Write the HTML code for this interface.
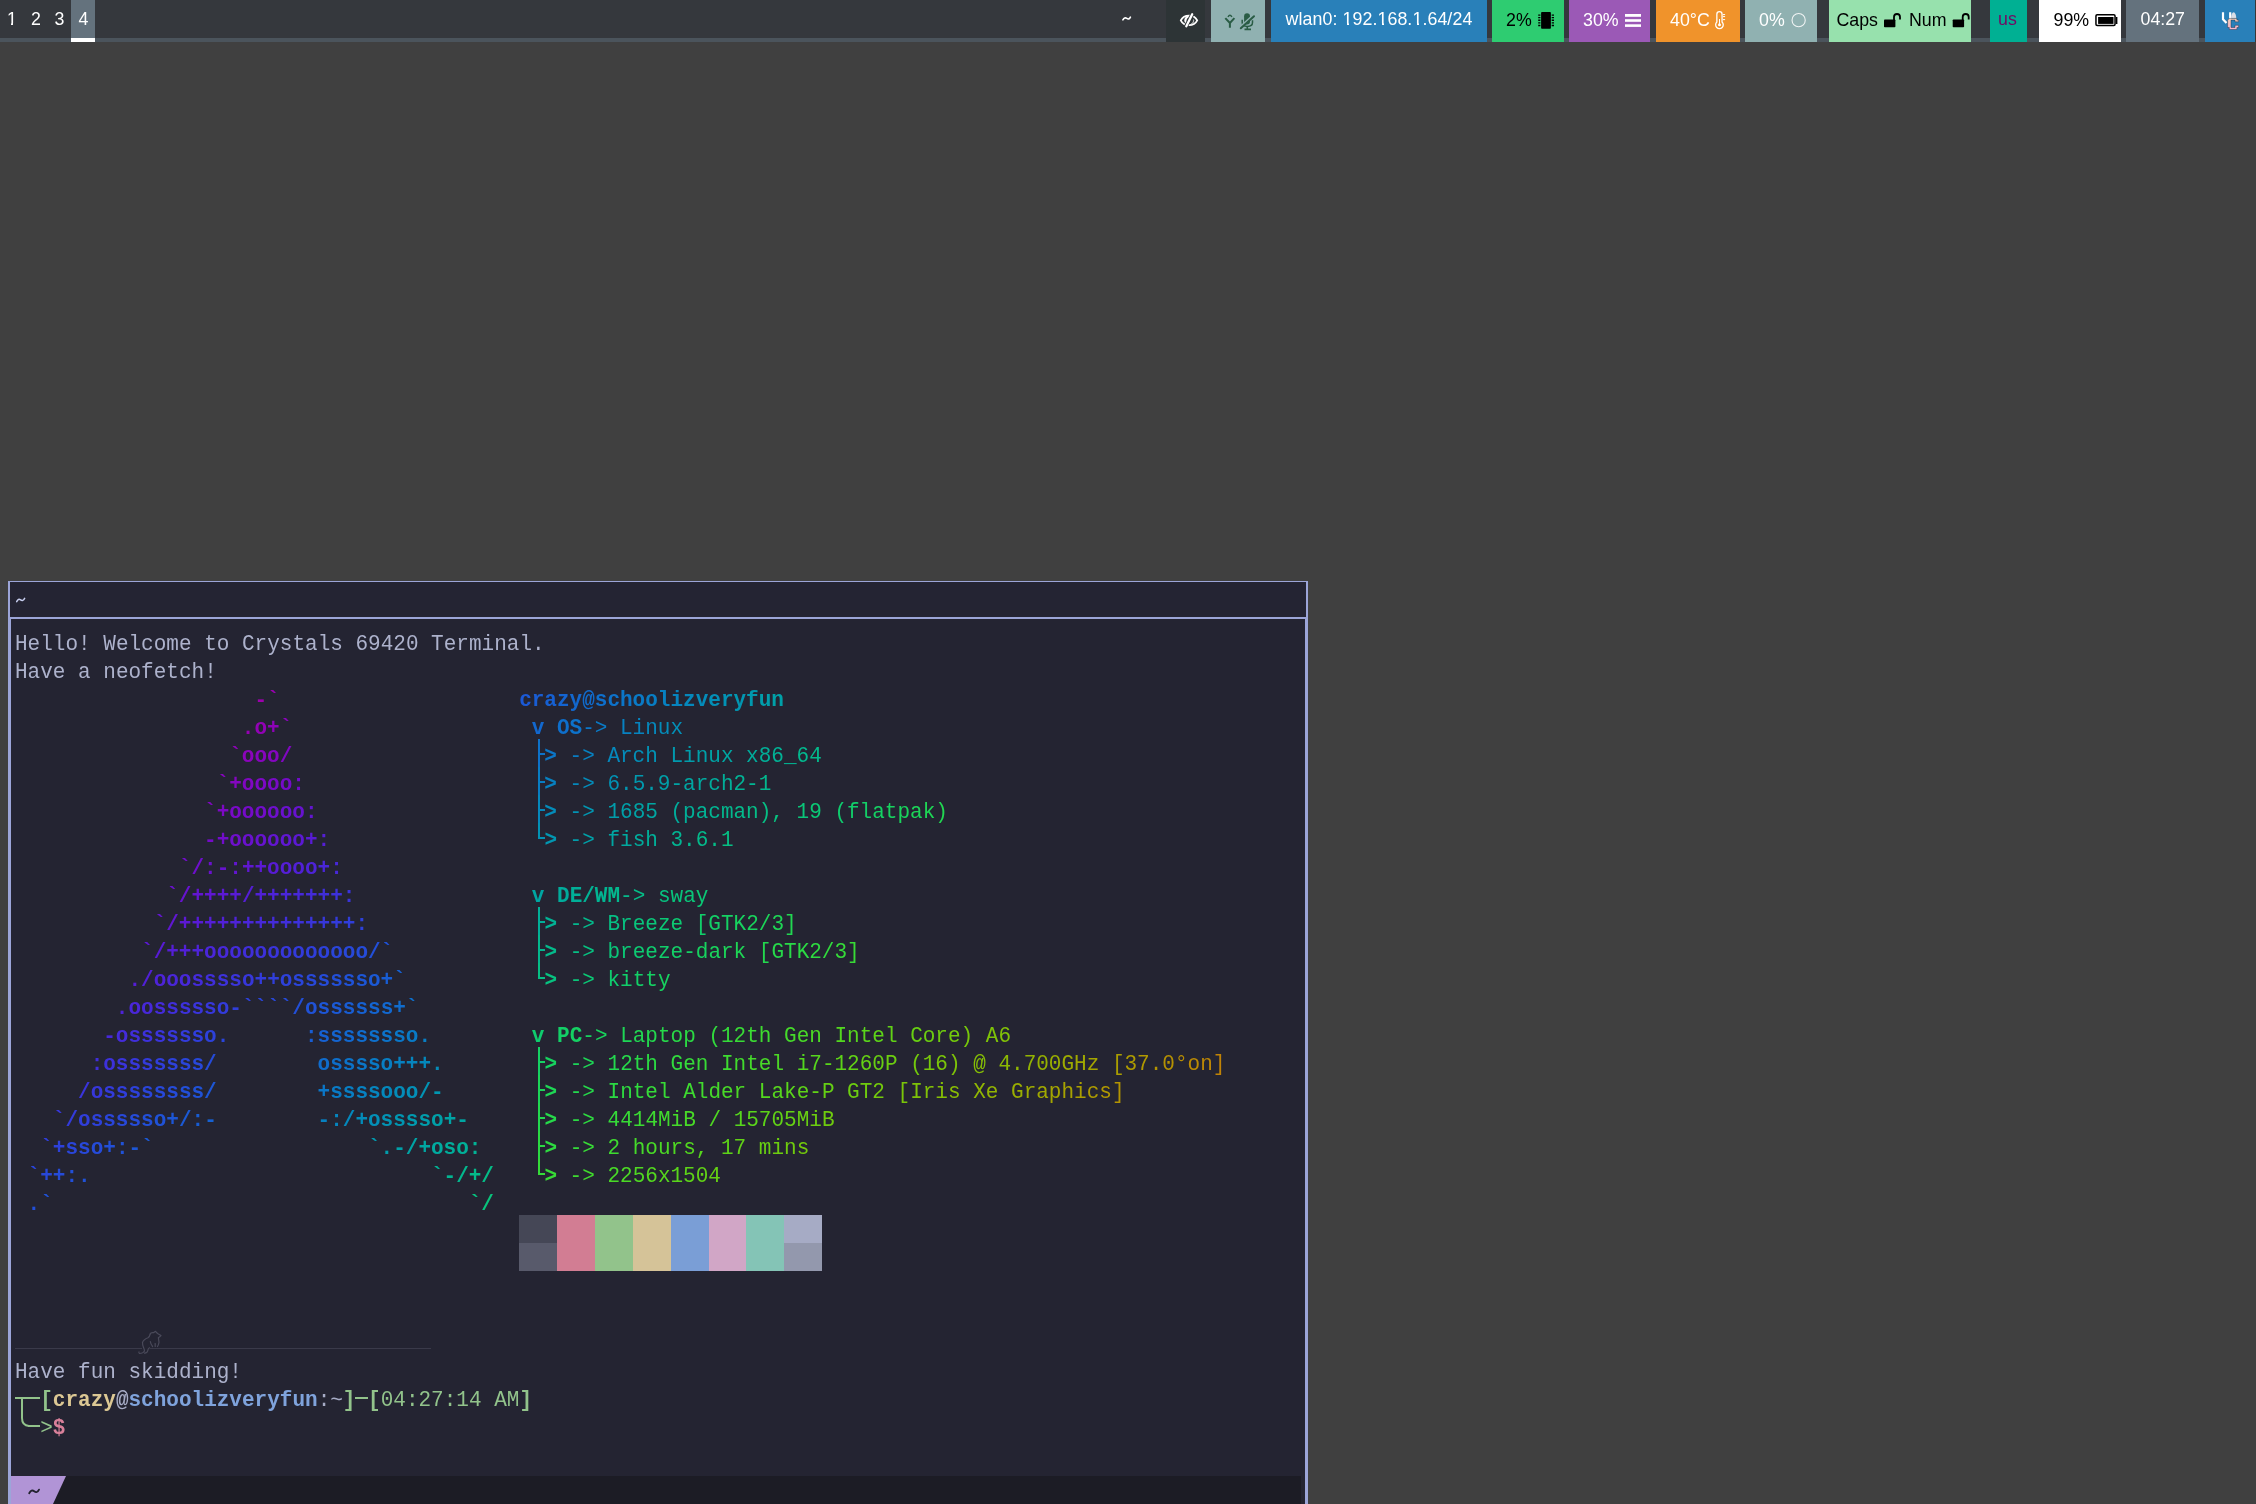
<!DOCTYPE html>
<html><head><meta charset="utf-8">
<style>
html,body{margin:0;padding:0}
body{width:2256px;height:1504px;background:#404040;position:relative;overflow:hidden;font-family:"Liberation Sans",sans-serif}
#bar{position:absolute;left:0;top:0;width:2256px;height:42px;background:#35383d}
#bar .bb{position:absolute;left:0;top:38px;width:2256px;height:4px;background:#4b545c}
.m{position:absolute;top:0;height:42px}
.bt{position:absolute;top:-2px;height:42px;line-height:42px;font-size:17.8px;white-space:pre;font-family:"Liberation Sans",sans-serif}
#win{position:absolute;left:8px;top:581px;width:1300px;height:923px;background:#9ca5d8}
#title{position:absolute;left:10px;top:582px;width:1296px;height:35px;background:#242433}
#content{position:absolute;left:11px;top:619px;width:1294px;height:885px;background:#242432}
.tr{position:absolute;left:15px;height:28px;line-height:28px;font-family:"Liberation Mono",monospace;font-size:21.015px;white-space:pre;color:#c3c7e0;transform:scaleY(1.07);transform-origin:0 19px}
.b{font-weight:bold}
</style></head>
<body>
<div id="root" style="position:absolute;left:0;top:0;width:2256px;height:1504px;will-change:transform">
<div id="bar">
  <div class="bb"></div>
  <!-- workspaces -->
  <div class="m" style="left:71px;width:24px;background:#64727d"></div>
  <div class="m" style="left:71px;top:38px;width:24px;height:4px;background:#ffffff"></div>
  <div class="bt" style="left:7px;color:#fff">1</div>
  <div class="m" style="left:7px;top:23px;width:4px;height:2px;background:#35383d"></div>
  <div class="m" style="left:13px;top:23px;width:4px;height:2px;background:#35383d"></div>
  <div class="bt" style="left:31px;color:#fff">2</div>
  <div class="bt" style="left:54.5px;color:#fff">3</div>
  <div class="bt" style="left:78.5px;color:#fff">4</div>
  <!-- window title -->
  <svg class="m" style="left:1122px;top:16px;height:6px" width="10" height="6"><path d="M0.9 3.9 Q2.6 0.8 4.8 2.4 Q7 4 8.4 1.1" fill="none" stroke="#fff" stroke-width="1.6" stroke-linecap="round"/></svg>
  <!-- idle inhibitor -->
  <div class="m" style="left:1166px;width:39px;background:#2d3436"></div>
  <svg class="m" style="left:1166px" width="39" height="42">
    <path d="M14.8 20.4 C18 14 28 14 31.2 20.4 C28 26.8 18 26.8 14.8 20.4 Z" fill="none" stroke="#fff" stroke-width="1.8"/>
    <path d="M20.2 22.5 A3.6 3.6 0 0 1 23.8 16.8" fill="none" stroke="#fff" stroke-width="2.2"/>
    <path d="M27.4 19.5 A3.4 3.4 0 0 1 25 24" fill="none" stroke="#b8bcbc" stroke-width="1.2"/>
    <path d="M20 26.3 L26.3 14.1" stroke="#2d3436" stroke-width="4"/>
    <path d="M20.3 26.2 L26.2 14.2" stroke="#fff" stroke-width="2.3" stroke-linecap="round"/>
  </svg>
  <!-- pulseaudio -->
  <div class="m" style="left:1211px;width:54px;background:#90b1b1"></div>
  <svg class="m" style="left:1211px" width="54" height="42">
    <path d="M14.3 18.1 L18.9 23 L23.4 18.1 M18.9 23 V27.7" fill="none" stroke="#2a5c45" stroke-width="2"/>
    <path d="M17 17 Q18.9 13.4 20.9 17" fill="none" stroke="#2a5c45" stroke-width="1.5"/>
    <rect x="33.1" y="13.2" width="5.9" height="11.2" rx="2.95" fill="#2a5c45"/>
    <path d="M41.5 20.3 V22.5 Q41.5 26.4 36.3 26.4 Q31.2 26.4 31.2 22.5 V19.8" fill="none" stroke="#2a5c45" stroke-width="1.5"/>
    <path d="M36.3 26.4 V29.4 M33.5 29.4 H40" stroke="#2a5c45" stroke-width="1.6"/>
    <path d="M29 27.3 L42.2 15.2" stroke="#90b1b1" stroke-width="2.2"/>
    <path d="M29.8 28.3 L43 16.2" stroke="#2a5c45" stroke-width="2" stroke-linecap="round"/>
  </svg>
  <!-- network -->
  <div class="m" style="left:1271px;width:216px;background:#2980b9"></div>
  <div class="bt" style="left:1285.5px;color:#fff;letter-spacing:0.09px">wlan0: 192.168.1.64/24</div>
  <div class="m" style="left:1343px;top:23px;width:4px;height:2px;background:#2980b9"></div>
  <div class="m" style="left:1349px;top:23px;width:4px;height:2px;background:#2980b9"></div>
  <div class="m" style="left:1378px;top:23px;width:4px;height:2px;background:#2980b9"></div>
  <div class="m" style="left:1384px;top:23px;width:4px;height:2px;background:#2980b9"></div>
  <div class="m" style="left:1413px;top:23px;width:4px;height:2px;background:#2980b9"></div>
  <div class="m" style="left:1419px;top:23px;width:4px;height:2px;background:#2980b9"></div>
  <!-- cpu -->
  <div class="m" style="left:1492px;width:72px;background:#2ecc71"></div>
  <div class="bt" style="top:-1px;left:1506px;color:#000">2%</div>
  <svg class="m" style="left:1492px" width="72" height="42">
    <rect x="49.1" y="12.1" width="9.8" height="16.6" rx="0.8" fill="#000"/>
    <g stroke="#000" stroke-width="1.4">
      <path d="M46.2 15.1 H48.4 M46.2 17.6 H48.4 M46.2 20.3 H48.4 M46.2 22.9 H48.4 M46.2 25.5 H48.4"/>
      <path d="M59.7 15.1 H62 M59.7 17.6 H62 M59.7 20.3 H62 M59.7 22.9 H62 M59.7 25.5 H62"/>
    </g>
  </svg>
  <!-- memory -->
  <div class="m" style="left:1569px;width:81px;background:#9b59b6"></div>
  <div class="bt" style="top:-1px;left:1583px;color:#fff">30%</div>
  <svg class="m" style="left:1569px" width="81" height="42">
    <rect x="56" y="14" width="16" height="2.8" fill="#fff"/>
    <rect x="56" y="19.2" width="16" height="2.6" fill="#fff"/>
    <rect x="56" y="24.3" width="16" height="2.6" fill="#fff"/>
  </svg>
  <!-- temperature -->
  <div class="m" style="left:1656px;width:84px;background:#f0932b"></div>
  <div class="bt" style="top:-1px;left:1670px;color:#fff">40°C</div>
  <svg class="m" style="left:1656px" width="84" height="42">
    <path d="M60.85 22 V14.25 A2.6 2.6 0 0 1 66.05 14.25 V22 A3.8 3.8 0 1 1 60.85 22 Z" fill="none" stroke="#fff" stroke-width="1.3"/>
    <path d="M63.5 19 V24" stroke="#fff" stroke-width="1"/>
    <circle cx="63.5" cy="24.8" r="1.5" fill="#fff"/>
    <path d="M66.9 14.6 H69.1 M66.9 16.6 H69.1 M66.9 19.6 H69.1" stroke="#fff" stroke-width="1"/>
  </svg>
  <!-- backlight -->
  <div class="m" style="left:1745px;width:72px;background:#90b1b1"></div>
  <div class="bt" style="top:-1px;left:1759px;color:#fff">0%</div>
  <svg class="m" style="left:1745px" width="72" height="42">
    <circle cx="53.65" cy="20.15" r="6.6" fill="none" stroke="#f0f4f4" stroke-width="1.1"/>
  </svg>
  <!-- keyboard state -->
  <div class="m" style="left:1829px;width:142px;background:#97e1ad"></div>
  <div class="bt" style="top:-1px;left:1836.5px;color:#000">Caps</div>
  <div class="bt" style="top:-1px;left:1909px;color:#000">Num</div>
  <svg class="m" style="left:1829px" width="142" height="42">
    <rect x="55" y="19.5" width="11.4" height="7.8" rx="0.8" fill="#000"/>
    <path d="M65 20 V17 A3 3 0 0 1 71 17 V19.5" fill="none" stroke="#000" stroke-width="1.8"/>
    <rect x="123.7" y="19.5" width="11.4" height="7.8" rx="0.8" fill="#000"/>
    <path d="M133.7 20 V17 A3 3 0 0 1 139.7 17 V19.5" fill="none" stroke="#000" stroke-width="1.8"/>
  </svg>
  <!-- language -->
  <div class="m" style="left:1990px;width:37px;background:#00b093"></div>
  <div class="bt" style="left:1998px;color:#740864">us</div>
  <!-- battery -->
  <div class="m" style="left:2039px;width:82px;background:#ffffff"></div>
  <div class="bt" style="top:-1px;left:2053.5px;color:#000">99%</div>
  <svg class="m" style="left:2039px" width="82" height="42">
    <rect x="56.95" y="14.85" width="19.1" height="10.7" rx="1.2" fill="none" stroke="#000" stroke-width="1.5"/>
    <rect x="59.1" y="17" width="15.4" height="6.9" fill="#000"/>
    <rect x="76.8" y="17" width="1.6" height="7" fill="#000"/>
  </svg>
  <!-- clock -->
  <div class="m" style="left:2126px;width:73px;background:#64727d"></div>
  <div class="bt" style="left:2140.5px;top:-2.5px;color:#fff">04:27</div>
  <div class="m" style="left:2255px;width:1px;background:#3b3735"></div>
  <!-- tray -->
  <div class="m" style="left:2205px;width:50px;background:#2980b9"></div>
  <svg class="m" style="left:2205px" width="50" height="42">
    <defs><linearGradient id="cg" x1="0" y1="0" x2="0" y2="1"><stop offset="0" stop-color="#f2cdb8"/><stop offset="1" stop-color="#f4b4cc"/></linearGradient></defs>
    <path d="M18 12.3 V19.3 L21.5 23 M25.2 12.3 V19" fill="none" stroke="#fff" stroke-width="2.2"/>
    <path d="M26 18.4 Q26.3 12.5 28.6 12.3 Q31 12.5 31.3 18.4 Z" fill="#d9dee6"/>
    <path d="M22.6 20.1 L24.3 18.4 H31.9 V20.1 H33.6 V21.8 H30 V20.1 H26 V27.5 H30 V25.3 H33.6 V27.5 H31.9 V29.5 H24.3 V27.5 H22.6 Z" fill="url(#cg)" stroke="#1a2a3a" stroke-width="0.6" stroke-opacity="0.7"/>
  </svg>
</div>

<div id="win"></div>
<div id="title"></div>
<svg style="position:absolute;left:16px;top:597px" width="10" height="6"><path d="M0.7 4.6 Q2.3 1.2 4.6 2.9 Q6.9 4.6 8.6 1.3" fill="none" stroke="#c8cff0" stroke-width="1.5" stroke-linecap="round"/></svg>
<div id="content"></div>
<!-- tab bar -->
<div style="position:absolute;left:11px;top:1476px;width:1290px;height:28px;background:#1c1c25"></div>
<svg style="position:absolute;left:11px;top:1476px" width="70" height="28">
  <path d="M0 0 H55 L42 28 H0 Z" fill="#b194d6"/>
</svg>
<svg style="position:absolute;left:28px;top:1488px" width="13" height="7"><path d="M1.2 5.2 Q3.5 1 6.2 3.3 Q9 5.6 11 1.6" fill="none" stroke="#22222e" stroke-width="1.8" stroke-linecap="round"/></svg>
<!-- divider line and cat -->
<div style="position:absolute;left:15px;top:1348px;width:127px;height:1px;background:#3a3a4a"></div>
<div style="position:absolute;left:150px;top:1348px;width:281px;height:1px;background:#3a3a4a"></div>
<svg style="position:absolute;left:136px;top:1329px" width="28" height="28">
  <g fill="none" stroke="#4a4a5a" stroke-width="1.2" stroke-linecap="round" stroke-linejoin="round">
  <path d="M14.2 5 Q14.8 3.2 17.5 3.7 L19.5 2.3 L21.5 4.5 L25 6.5 L23.5 8 L22.4 8.5 Q22.7 11 23 13.5 Q22.5 16 21.5 17.5"/>
  <path d="M14.2 5 Q13.5 8 12 8.8 Q7.5 10.5 6.5 13.5 Q6.5 16.5 7.5 18.5 Q8.5 20.5 8.5 22 Q7 24.5 3.5 24.5 Q2.5 23.5 3 23"/>
  <path d="M8.5 24.2 Q11.5 24 11.8 21.5 Q12 19.5 13.5 18.8"/>
  <path d="M14.3 12.5 Q14.8 15.5 16.6 17.5"/>
  <path d="M19.2 14.5 V17.5"/>
  </g>
</svg>
<div class="tr" style="top:631.00px"><span style="color:#adb2cc">H</span><span style="color:#adb2cc">e</span><span style="color:#adb2cc">l</span><span style="color:#adb2cc">l</span><span style="color:#adb2cc">o</span><span style="color:#adb2cc">!</span> <span style="color:#adb2cc">W</span><span style="color:#adb2cc">e</span><span style="color:#adb2cc">l</span><span style="color:#adb2cc">c</span><span style="color:#adb2cc">o</span><span style="color:#adb2cc">m</span><span style="color:#adb2cc">e</span> <span style="color:#adb2cc">t</span><span style="color:#adb2cc">o</span> <span style="color:#adb2cc">C</span><span style="color:#adb2cc">r</span><span style="color:#adb2cc">y</span><span style="color:#adb2cc">s</span><span style="color:#adb2cc">t</span><span style="color:#adb2cc">a</span><span style="color:#adb2cc">l</span><span style="color:#adb2cc">s</span> <span style="color:#adb2cc">6</span><span style="color:#adb2cc">9</span><span style="color:#adb2cc">4</span><span style="color:#adb2cc">2</span><span style="color:#adb2cc">0</span> <span style="color:#adb2cc">T</span><span style="color:#adb2cc">e</span><span style="color:#adb2cc">r</span><span style="color:#adb2cc">m</span><span style="color:#adb2cc">i</span><span style="color:#adb2cc">n</span><span style="color:#adb2cc">a</span><span style="color:#adb2cc">l</span><span style="color:#adb2cc">.</span></div>
<div class="tr" style="top:659.00px"><span style="color:#adb2cc">H</span><span style="color:#adb2cc">a</span><span style="color:#adb2cc">v</span><span style="color:#adb2cc">e</span> <span style="color:#adb2cc">a</span> <span style="color:#adb2cc">n</span><span style="color:#adb2cc">e</span><span style="color:#adb2cc">o</span><span style="color:#adb2cc">f</span><span style="color:#adb2cc">e</span><span style="color:#adb2cc">t</span><span style="color:#adb2cc">c</span><span style="color:#adb2cc">h</span><span style="color:#adb2cc">!</span></div>
<div class="tr" style="top:687.00px">                   <span class="b" style="color:#9c01ac">-</span><span class="b" style="color:#9901af">`</span>                   <span class="b" style="color:#1b59d5">c</span><span class="b" style="color:#195dd3">r</span><span class="b" style="color:#1660d2">a</span><span class="b" style="color:#1464d1">z</span><span class="b" style="color:#1268cf">y</span><span class="b" style="color:#106bcd">@</span><span class="b" style="color:#0e6fcc">s</span><span class="b" style="color:#0d72ca">c</span><span class="b" style="color:#0b76c8">h</span><span class="b" style="color:#0a7ac6">o</span><span class="b" style="color:#087dc3">o</span><span class="b" style="color:#0781c1">l</span><span class="b" style="color:#0684bf">i</span><span class="b" style="color:#0588bc">z</span><span class="b" style="color:#048cba">v</span><span class="b" style="color:#038fb7">e</span><span class="b" style="color:#0292b4">r</span><span class="b" style="color:#0296b1">y</span><span class="b" style="color:#0199ae">f</span><span class="b" style="color:#019dab">u</span><span class="b" style="color:#00a0a8">n</span></div>
<div class="tr" style="top:715.00px">                  <span class="b" style="color:#9502b2">.</span><span class="b" style="color:#9202b5">o</span><span class="b" style="color:#8e03b7">+</span><span class="b" style="color:#8b04ba">`</span>                   <span class="b" style="color:#1268cf">v</span> <span class="b" style="color:#0e6fcc">O</span><span class="b" style="color:#0d72ca">S</span><span style="color:#0b76c8">-</span><span style="color:#0a7ac6">&gt;</span> <span style="color:#0781c1">L</span><span style="color:#0684bf">i</span><span style="color:#0588bc">n</span><span style="color:#048cba">u</span><span style="color:#038fb7">x</span></div>
<div class="tr" style="top:743.00px">                 <span class="b" style="color:#8e03b7">`</span><span class="b" style="color:#8b04ba">o</span><span class="b" style="color:#8705bd">o</span><span class="b" style="color:#8406bf">o</span><span class="b" style="color:#8007c1">/</span>                    <span class="b" style="color:#0b76c8">&gt;</span> <span style="color:#087dc3">-</span><span style="color:#0781c1">&gt;</span> <span style="color:#0588bc">A</span><span style="color:#048cba">r</span><span style="color:#038fb7">c</span><span style="color:#0292b4">h</span> <span style="color:#0199ae">L</span><span style="color:#019dab">i</span><span style="color:#00a0a8">n</span><span style="color:#00a3a5">u</span><span style="color:#00a6a2">x</span> <span style="color:#01ac9c">x</span><span style="color:#01af98">8</span><span style="color:#02b295">6</span><span style="color:#02b592">_</span><span style="color:#03b88e">6</span><span style="color:#04ba8b">4</span></div>
<div class="tr" style="top:771.00px">                <span class="b" style="color:#8705bd">`</span><span class="b" style="color:#8406bf">+</span><span class="b" style="color:#8007c1">o</span><span class="b" style="color:#7d08c4">o</span><span class="b" style="color:#790ac6">o</span><span class="b" style="color:#750bc8">o</span><span class="b" style="color:#720dca">:</span>                   <span class="b" style="color:#0781c1">&gt;</span> <span style="color:#0588bc">-</span><span style="color:#048cba">&gt;</span> <span style="color:#0292b4">6</span><span style="color:#0296b1">.</span><span style="color:#0199ae">5</span><span style="color:#019dab">.</span><span style="color:#00a0a8">9</span><span style="color:#00a3a5">-</span><span style="color:#00a6a2">a</span><span style="color:#01a99f">r</span><span style="color:#01ac9c">c</span><span style="color:#01af98">h</span><span style="color:#02b295">2</span><span style="color:#02b592">-</span><span style="color:#03b88e">1</span></div>
<div class="tr" style="top:799.00px">               <span class="b" style="color:#8007c1">`</span><span class="b" style="color:#7d08c4">+</span><span class="b" style="color:#790ac6">o</span><span class="b" style="color:#750bc8">o</span><span class="b" style="color:#720dca">o</span><span class="b" style="color:#6e0fcc">o</span><span class="b" style="color:#6a11ce">o</span><span class="b" style="color:#6713cf">o</span><span class="b" style="color:#6315d1">:</span>                  <span class="b" style="color:#048cba">&gt;</span> <span style="color:#0292b4">-</span><span style="color:#0296b1">&gt;</span> <span style="color:#019dab">1</span><span style="color:#00a0a8">6</span><span style="color:#00a3a5">8</span><span style="color:#00a6a2">5</span> <span style="color:#01ac9c">(</span><span style="color:#01af98">p</span><span style="color:#02b295">a</span><span style="color:#02b592">c</span><span style="color:#03b88e">m</span><span style="color:#04ba8b">a</span><span style="color:#05bd87">n</span><span style="color:#06bf84">)</span><span style="color:#07c280">,</span> <span style="color:#0ac679">1</span><span style="color:#0bc875">9</span> <span style="color:#0fcc6e">(</span><span style="color:#11ce6a">f</span><span style="color:#13cf67">l</span><span style="color:#15d163">a</span><span style="color:#17d25f">t</span><span style="color:#19d45c">p</span><span style="color:#1cd558">a</span><span style="color:#1ed655">k</span><span style="color:#21d751">)</span></div>
<div class="tr" style="top:827.00px">               <span class="b" style="color:#750bc8">-</span><span class="b" style="color:#720dca">+</span><span class="b" style="color:#6e0fcc">o</span><span class="b" style="color:#6a11ce">o</span><span class="b" style="color:#6713cf">o</span><span class="b" style="color:#6315d1">o</span><span class="b" style="color:#6017d2">o</span><span class="b" style="color:#5c19d4">o</span><span class="b" style="color:#581bd5">+</span><span class="b" style="color:#551ed6">:</span>                 <span class="b" style="color:#0296b1">&gt;</span> <span style="color:#019dab">-</span><span style="color:#00a0a8">&gt;</span> <span style="color:#00a6a2">f</span><span style="color:#01a99f">i</span><span style="color:#01ac9c">s</span><span style="color:#01af98">h</span> <span style="color:#02b592">3</span><span style="color:#03b88e">.</span><span style="color:#04ba8b">6</span><span style="color:#05bd87">.</span><span style="color:#06bf84">1</span></div>
<div class="tr" style="top:855.00px">             <span class="b" style="color:#720dca">`</span><span class="b" style="color:#6e0fcc">/</span><span class="b" style="color:#6a11ce">:</span><span class="b" style="color:#6713cf">-</span><span class="b" style="color:#6315d1">:</span><span class="b" style="color:#6017d2">+</span><span class="b" style="color:#5c19d4">+</span><span class="b" style="color:#581bd5">o</span><span class="b" style="color:#551ed6">o</span><span class="b" style="color:#5120d7">o</span><span class="b" style="color:#4e23d8">o</span><span class="b" style="color:#4a26d9">+</span><span class="b" style="color:#4728d9">:</span></div>
<div class="tr" style="top:883.00px">            <span class="b" style="color:#6a11ce">`</span><span class="b" style="color:#6713cf">/</span><span class="b" style="color:#6315d1">+</span><span class="b" style="color:#6017d2">+</span><span class="b" style="color:#5c19d4">+</span><span class="b" style="color:#581bd5">+</span><span class="b" style="color:#551ed6">/</span><span class="b" style="color:#5120d7">+</span><span class="b" style="color:#4e23d8">+</span><span class="b" style="color:#4a26d9">+</span><span class="b" style="color:#4728d9">+</span><span class="b" style="color:#442bda">+</span><span class="b" style="color:#402eda">+</span><span class="b" style="color:#3d31db">+</span><span class="b" style="color:#3a34db">:</span>              <span class="b" style="color:#00a6a2">v</span> <span class="b" style="color:#01ac9c">D</span><span class="b" style="color:#01af98">E</span><span class="b" style="color:#02b295">/</span><span class="b" style="color:#02b592">W</span><span class="b" style="color:#03b88e">M</span><span style="color:#04ba8b">-</span><span style="color:#05bd87">&gt;</span> <span style="color:#07c280">s</span><span style="color:#08c47c">w</span><span style="color:#0ac679">a</span><span style="color:#0bc875">y</span></div>
<div class="tr" style="top:911.00px">           <span class="b" style="color:#6315d1">`</span><span class="b" style="color:#6017d2">/</span><span class="b" style="color:#5c19d4">+</span><span class="b" style="color:#581bd5">+</span><span class="b" style="color:#551ed6">+</span><span class="b" style="color:#5120d7">+</span><span class="b" style="color:#4e23d8">+</span><span class="b" style="color:#4a26d9">+</span><span class="b" style="color:#4728d9">+</span><span class="b" style="color:#442bda">+</span><span class="b" style="color:#402eda">+</span><span class="b" style="color:#3d31db">+</span><span class="b" style="color:#3a34db">+</span><span class="b" style="color:#3737db">+</span><span class="b" style="color:#333bdb">+</span><span class="b" style="color:#303edb">+</span><span class="b" style="color:#2d41da">:</span>              <span class="b" style="color:#02b295">&gt;</span> <span style="color:#03b88e">-</span><span style="color:#04ba8b">&gt;</span> <span style="color:#06bf84">B</span><span style="color:#07c280">r</span><span style="color:#08c47c">e</span><span style="color:#0ac679">e</span><span style="color:#0bc875">z</span><span style="color:#0dca72">e</span> <span style="color:#11ce6a">[</span><span style="color:#13cf67">G</span><span style="color:#15d163">T</span><span style="color:#17d25f">K</span><span style="color:#19d45c">2</span><span style="color:#1cd558">/</span><span style="color:#1ed655">3</span><span style="color:#21d751">]</span></div>
<div class="tr" style="top:939.00px">          <span class="b" style="color:#5c19d4">`</span><span class="b" style="color:#581bd5">/</span><span class="b" style="color:#551ed6">+</span><span class="b" style="color:#5120d7">+</span><span class="b" style="color:#4e23d8">+</span><span class="b" style="color:#4a26d9">o</span><span class="b" style="color:#4728d9">o</span><span class="b" style="color:#442bda">o</span><span class="b" style="color:#402eda">o</span><span class="b" style="color:#3d31db">o</span><span class="b" style="color:#3a34db">o</span><span class="b" style="color:#3737db">o</span><span class="b" style="color:#333bdb">o</span><span class="b" style="color:#303edb">o</span><span class="b" style="color:#2d41da">o</span><span class="b" style="color:#2a45da">o</span><span class="b" style="color:#2848d9">o</span><span class="b" style="color:#254bd9">o</span><span class="b" style="color:#224fd8">/</span><span class="b" style="color:#2052d7">`</span>            <span class="b" style="color:#04ba8b">&gt;</span> <span style="color:#06bf84">-</span><span style="color:#07c280">&gt;</span> <span style="color:#0ac679">b</span><span style="color:#0bc875">r</span><span style="color:#0dca72">e</span><span style="color:#0fcc6e">e</span><span style="color:#11ce6a">z</span><span style="color:#13cf67">e</span><span style="color:#15d163">-</span><span style="color:#17d25f">d</span><span style="color:#19d45c">a</span><span style="color:#1cd558">r</span><span style="color:#1ed655">k</span> <span style="color:#23d84e">[</span><span style="color:#26d94a">G</span><span style="color:#29d947">T</span><span style="color:#2bda43">K</span><span style="color:#2eda40">2</span><span style="color:#31db3d">/</span><span style="color:#35db39">3</span><span style="color:#38db36">]</span></div>
<div class="tr" style="top:967.00px">         <span class="b" style="color:#551ed6">.</span><span class="b" style="color:#5120d7">/</span><span class="b" style="color:#4e23d8">o</span><span class="b" style="color:#4a26d9">o</span><span class="b" style="color:#4728d9">o</span><span class="b" style="color:#442bda">s</span><span class="b" style="color:#402eda">s</span><span class="b" style="color:#3d31db">s</span><span class="b" style="color:#3a34db">s</span><span class="b" style="color:#3737db">o</span><span class="b" style="color:#333bdb">+</span><span class="b" style="color:#303edb">+</span><span class="b" style="color:#2d41da">o</span><span class="b" style="color:#2a45da">s</span><span class="b" style="color:#2848d9">s</span><span class="b" style="color:#254bd9">s</span><span class="b" style="color:#224fd8">s</span><span class="b" style="color:#2052d7">s</span><span class="b" style="color:#1d56d6">s</span><span class="b" style="color:#1b59d5">o</span><span class="b" style="color:#185dd3">+</span><span class="b" style="color:#1661d2">`</span>           <span class="b" style="color:#07c280">&gt;</span> <span style="color:#0ac679">-</span><span style="color:#0bc875">&gt;</span> <span style="color:#0fcc6e">k</span><span style="color:#11ce6a">i</span><span style="color:#13cf67">t</span><span style="color:#15d163">t</span><span style="color:#17d25f">y</span></div>
<div class="tr" style="top:995.00px">        <span class="b" style="color:#4e23d8">.</span><span class="b" style="color:#4a26d9">o</span><span class="b" style="color:#4728d9">o</span><span class="b" style="color:#442bda">s</span><span class="b" style="color:#402eda">s</span><span class="b" style="color:#3d31db">s</span><span class="b" style="color:#3a34db">s</span><span class="b" style="color:#3737db">s</span><span class="b" style="color:#333bdb">o</span><span class="b" style="color:#303edb">-</span><span class="b" style="color:#2d41da">`</span><span class="b" style="color:#2a45da">`</span><span class="b" style="color:#2848d9">`</span><span class="b" style="color:#254bd9">`</span><span class="b" style="color:#224fd8">/</span><span class="b" style="color:#2052d7">o</span><span class="b" style="color:#1d56d6">s</span><span class="b" style="color:#1b59d5">s</span><span class="b" style="color:#185dd3">s</span><span class="b" style="color:#1661d2">s</span><span class="b" style="color:#1464d0">s</span><span class="b" style="color:#1268cf">s</span><span class="b" style="color:#106ccd">+</span><span class="b" style="color:#0e6fcb">`</span></div>
<div class="tr" style="top:1023.00px">       <span class="b" style="color:#4728d9">-</span><span class="b" style="color:#442bda">o</span><span class="b" style="color:#402eda">s</span><span class="b" style="color:#3d31db">s</span><span class="b" style="color:#3a34db">s</span><span class="b" style="color:#3737db">s</span><span class="b" style="color:#333bdb">s</span><span class="b" style="color:#303edb">s</span><span class="b" style="color:#2d41da">o</span><span class="b" style="color:#2a45da">.</span>      <span class="b" style="color:#185dd3">:</span><span class="b" style="color:#1661d2">s</span><span class="b" style="color:#1464d0">s</span><span class="b" style="color:#1268cf">s</span><span class="b" style="color:#106ccd">s</span><span class="b" style="color:#0e6fcb">s</span><span class="b" style="color:#0c73c9">s</span><span class="b" style="color:#0b76c7">s</span><span class="b" style="color:#097ac5">o</span><span class="b" style="color:#087ec3">.</span>        <span class="b" style="color:#0fcc6e">v</span> <span class="b" style="color:#13cf67">P</span><span class="b" style="color:#15d163">C</span><span style="color:#17d25f">-</span><span style="color:#19d45c">&gt;</span> <span style="color:#1ed655">L</span><span style="color:#21d751">a</span><span style="color:#23d84e">p</span><span style="color:#26d94a">t</span><span style="color:#29d947">o</span><span style="color:#2bda43">p</span> <span style="color:#31db3d">(</span><span style="color:#35db39">1</span><span style="color:#38db36">2</span><span style="color:#3bdb33">t</span><span style="color:#3edb30">h</span> <span style="color:#45da2a">G</span><span style="color:#48d927">e</span><span style="color:#4cd825">n</span> <span style="color:#53d71f">I</span><span style="color:#56d61d">n</span><span style="color:#5ad51b">t</span><span style="color:#5dd318">e</span><span style="color:#61d216">l</span> <span style="color:#68cf12">C</span><span style="color:#6ccd10">o</span><span style="color:#6fcb0e">r</span><span style="color:#73c90c">e</span><span style="color:#77c70b">)</span> <span style="color:#7ec308">A</span><span style="color:#82c107">6</span></div>
<div class="tr" style="top:1051.00px">      <span class="b" style="color:#402eda">:</span><span class="b" style="color:#3d31db">o</span><span class="b" style="color:#3a34db">s</span><span class="b" style="color:#3737db">s</span><span class="b" style="color:#333bdb">s</span><span class="b" style="color:#303edb">s</span><span class="b" style="color:#2d41da">s</span><span class="b" style="color:#2a45da">s</span><span class="b" style="color:#2848d9">s</span><span class="b" style="color:#254bd9">/</span>        <span class="b" style="color:#106ccd">o</span><span class="b" style="color:#0e6fcb">s</span><span class="b" style="color:#0c73c9">s</span><span class="b" style="color:#0b76c7">s</span><span class="b" style="color:#097ac5">s</span><span class="b" style="color:#087ec3">o</span><span class="b" style="color:#0781c1">+</span><span class="b" style="color:#0685be">+</span><span class="b" style="color:#0488bc">+</span><span class="b" style="color:#048cb9">.</span>        <span class="b" style="color:#17d25f">&gt;</span> <span style="color:#1cd558">-</span><span style="color:#1ed655">&gt;</span> <span style="color:#23d84e">1</span><span style="color:#26d94a">2</span><span style="color:#29d947">t</span><span style="color:#2bda43">h</span> <span style="color:#31db3d">G</span><span style="color:#35db39">e</span><span style="color:#38db36">n</span> <span style="color:#3edb30">I</span><span style="color:#41da2d">n</span><span style="color:#45da2a">t</span><span style="color:#48d927">e</span><span style="color:#4cd825">l</span> <span style="color:#53d71f">i</span><span style="color:#56d61d">7</span><span style="color:#5ad51b">-</span><span style="color:#5dd318">1</span><span style="color:#61d216">2</span><span style="color:#65d014">6</span><span style="color:#68cf12">0</span><span style="color:#6ccd10">P</span> <span style="color:#73c90c">(</span><span style="color:#77c70b">1</span><span style="color:#7ac509">6</span><span style="color:#7ec308">)</span> <span style="color:#85be05">@</span> <span style="color:#8cb903">4</span><span style="color:#90b603">.</span><span style="color:#93b402">7</span><span style="color:#96b101">0</span><span style="color:#9aae01">0</span><span style="color:#9dab01">G</span><span style="color:#a0a800">H</span><span style="color:#a4a500">z</span> <span style="color:#aa9e01">[</span><span style="color:#ad9b01">3</span><span style="color:#b09801">7</span><span style="color:#b39402">.</span><span style="color:#b59102">0</span><span style="color:#b88e03">°</span><span style="color:#bb8a04">o</span><span style="color:#bd8705">n</span><span style="color:#c08306">]</span></div>
<div class="tr" style="top:1079.00px">     <span class="b" style="color:#3a34db">/</span><span class="b" style="color:#3737db">o</span><span class="b" style="color:#333bdb">s</span><span class="b" style="color:#303edb">s</span><span class="b" style="color:#2d41da">s</span><span class="b" style="color:#2a45da">s</span><span class="b" style="color:#2848d9">s</span><span class="b" style="color:#254bd9">s</span><span class="b" style="color:#224fd8">s</span><span class="b" style="color:#2052d7">s</span><span class="b" style="color:#1d56d6">/</span>        <span class="b" style="color:#0b76c7">+</span><span class="b" style="color:#097ac5">s</span><span class="b" style="color:#087ec3">s</span><span class="b" style="color:#0781c1">s</span><span class="b" style="color:#0685be">s</span><span class="b" style="color:#0488bc">o</span><span class="b" style="color:#048cb9">o</span><span class="b" style="color:#038fb7">o</span><span class="b" style="color:#0293b4">/</span><span class="b" style="color:#0196b1">-</span>        <span class="b" style="color:#1ed655">&gt;</span> <span style="color:#23d84e">-</span><span style="color:#26d94a">&gt;</span> <span style="color:#2bda43">I</span><span style="color:#2eda40">n</span><span style="color:#31db3d">t</span><span style="color:#35db39">e</span><span style="color:#38db36">l</span> <span style="color:#3edb30">A</span><span style="color:#41da2d">l</span><span style="color:#45da2a">d</span><span style="color:#48d927">e</span><span style="color:#4cd825">r</span> <span style="color:#53d71f">L</span><span style="color:#56d61d">a</span><span style="color:#5ad51b">k</span><span style="color:#5dd318">e</span><span style="color:#61d216">-</span><span style="color:#65d014">P</span> <span style="color:#6ccd10">G</span><span style="color:#6fcb0e">T</span><span style="color:#73c90c">2</span> <span style="color:#7ac509">[</span><span style="color:#7ec308">I</span><span style="color:#82c107">r</span><span style="color:#85be05">i</span><span style="color:#89bc04">s</span> <span style="color:#90b603">X</span><span style="color:#93b402">e</span> <span style="color:#9aae01">G</span><span style="color:#9dab01">r</span><span style="color:#a0a800">a</span><span style="color:#a4a500">p</span><span style="color:#a7a200">h</span><span style="color:#aa9e01">i</span><span style="color:#ad9b01">c</span><span style="color:#b09801">s</span><span style="color:#b39402">]</span></div>
<div class="tr" style="top:1107.00px">   <span class="b" style="color:#3737db">`</span><span class="b" style="color:#333bdb">/</span><span class="b" style="color:#303edb">o</span><span class="b" style="color:#2d41da">s</span><span class="b" style="color:#2a45da">s</span><span class="b" style="color:#2848d9">s</span><span class="b" style="color:#254bd9">s</span><span class="b" style="color:#224fd8">s</span><span class="b" style="color:#2052d7">o</span><span class="b" style="color:#1d56d6">+</span><span class="b" style="color:#1b59d5">/</span><span class="b" style="color:#185dd3">:</span><span class="b" style="color:#1661d2">-</span>        <span class="b" style="color:#0781c1">-</span><span class="b" style="color:#0685be">:</span><span class="b" style="color:#0488bc">/</span><span class="b" style="color:#048cb9">+</span><span class="b" style="color:#038fb7">o</span><span class="b" style="color:#0293b4">s</span><span class="b" style="color:#0196b1">s</span><span class="b" style="color:#019aae">s</span><span class="b" style="color:#019dab">s</span><span class="b" style="color:#00a0a8">o</span><span class="b" style="color:#00a3a5">+</span><span class="b" style="color:#00a6a2">-</span>      <span class="b" style="color:#26d94a">&gt;</span> <span style="color:#2bda43">-</span><span style="color:#2eda40">&gt;</span> <span style="color:#35db39">4</span><span style="color:#38db36">4</span><span style="color:#3bdb33">1</span><span style="color:#3edb30">4</span><span style="color:#41da2d">M</span><span style="color:#45da2a">i</span><span style="color:#48d927">B</span> <span style="color:#4fd822">/</span> <span style="color:#56d61d">1</span><span style="color:#5ad51b">5</span><span style="color:#5dd318">7</span><span style="color:#61d216">0</span><span style="color:#65d014">5</span><span style="color:#68cf12">M</span><span style="color:#6ccd10">i</span><span style="color:#6fcb0e">B</span></div>
<div class="tr" style="top:1135.00px">  <span class="b" style="color:#303edb">`</span><span class="b" style="color:#2d41da">+</span><span class="b" style="color:#2a45da">s</span><span class="b" style="color:#2848d9">s</span><span class="b" style="color:#254bd9">o</span><span class="b" style="color:#224fd8">+</span><span class="b" style="color:#2052d7">:</span><span class="b" style="color:#1d56d6">-</span><span class="b" style="color:#1b59d5">`</span>                 <span class="b" style="color:#019aae">`</span><span class="b" style="color:#019dab">.</span><span class="b" style="color:#00a0a8">-</span><span class="b" style="color:#00a3a5">/</span><span class="b" style="color:#00a6a2">+</span><span class="b" style="color:#01aa9f">o</span><span class="b" style="color:#01ad9b">s</span><span class="b" style="color:#01af98">o</span><span class="b" style="color:#02b295">:</span>     <span class="b" style="color:#2eda40">&gt;</span> <span style="color:#35db39">-</span><span style="color:#38db36">&gt;</span> <span style="color:#3edb30">2</span> <span style="color:#45da2a">h</span><span style="color:#48d927">o</span><span style="color:#4cd825">u</span><span style="color:#4fd822">r</span><span style="color:#53d71f">s</span><span style="color:#56d61d">,</span> <span style="color:#5dd318">1</span><span style="color:#61d216">7</span> <span style="color:#68cf12">m</span><span style="color:#6ccd10">i</span><span style="color:#6fcb0e">n</span><span style="color:#73c90c">s</span></div>
<div class="tr" style="top:1163.00px"> <span class="b" style="color:#2a45da">`</span><span class="b" style="color:#2848d9">+</span><span class="b" style="color:#254bd9">+</span><span class="b" style="color:#224fd8">:</span><span class="b" style="color:#2052d7">.</span>                           <span class="b" style="color:#02b295">`</span><span class="b" style="color:#02b591">-</span><span class="b" style="color:#03b88e">/</span><span class="b" style="color:#04ba8a">+</span><span class="b" style="color:#05bd87">/</span>    <span class="b" style="color:#38db36">&gt;</span> <span style="color:#3edb30">-</span><span style="color:#41da2d">&gt;</span> <span style="color:#48d927">2</span><span style="color:#4cd825">2</span><span style="color:#4fd822">5</span><span style="color:#53d71f">6</span><span style="color:#56d61d">x</span><span style="color:#5ad51b">1</span><span style="color:#5dd318">5</span><span style="color:#61d216">0</span><span style="color:#65d014">4</span></div>
<div class="tr" style="top:1191.00px"> <span class="b" style="color:#224fd8">.</span><span class="b" style="color:#2052d7">`</span>                                 <span class="b" style="color:#07c280">`</span><span class="b" style="color:#09c47c">/</span></div>
<div class="tr" style="top:1359.00px"><span style="color:#adb2cc">H</span><span style="color:#adb2cc">a</span><span style="color:#adb2cc">v</span><span style="color:#adb2cc">e</span> <span style="color:#adb2cc">f</span><span style="color:#adb2cc">u</span><span style="color:#adb2cc">n</span> <span style="color:#adb2cc">s</span><span style="color:#adb2cc">k</span><span style="color:#adb2cc">i</span><span style="color:#adb2cc">d</span><span style="color:#adb2cc">d</span><span style="color:#adb2cc">i</span><span style="color:#adb2cc">n</span><span style="color:#adb2cc">g</span><span style="color:#adb2cc">!</span></div>
<div class="tr" style="top:1387.00px">  <span class="b" style="color:#92c38b">[</span><span class="b" style="color:#dcc894">c</span><span class="b" style="color:#dcc894">r</span><span class="b" style="color:#dcc894">a</span><span class="b" style="color:#dcc894">z</span><span class="b" style="color:#dcc894">y</span><span class="b" style="color:#a6abc5">@</span><span class="b" style="color:#7fa3dc">s</span><span class="b" style="color:#7fa3dc">c</span><span class="b" style="color:#7fa3dc">h</span><span class="b" style="color:#7fa3dc">o</span><span class="b" style="color:#7fa3dc">o</span><span class="b" style="color:#7fa3dc">l</span><span class="b" style="color:#7fa3dc">i</span><span class="b" style="color:#7fa3dc">z</span><span class="b" style="color:#7fa3dc">v</span><span class="b" style="color:#7fa3dc">e</span><span class="b" style="color:#7fa3dc">r</span><span class="b" style="color:#7fa3dc">y</span><span class="b" style="color:#7fa3dc">f</span><span class="b" style="color:#7fa3dc">u</span><span class="b" style="color:#7fa3dc">n</span><span style="color:#a6abc5">:</span><span style="color:#a6abc5">~</span><span class="b" style="color:#92c38b">]</span> <span class="b" style="color:#92c38b">[</span><span style="color:#92c38b">0</span><span style="color:#92c38b">4</span><span style="color:#92c38b">:</span><span style="color:#92c38b">2</span><span style="color:#92c38b">7</span><span style="color:#92c38b">:</span><span style="color:#92c38b">1</span><span style="color:#92c38b">4</span> <span style="color:#92c38b">A</span><span style="color:#92c38b">M</span><span class="b" style="color:#92c38b">]</span></div>
<div class="tr" style="top:1415.00px">  <span style="color:#92c38b">&gt;</span><span class="b" style="color:#d9809a">$</span></div>
<div style="position:absolute;left:538px;top:739px;width:2px;height:28px;background:#0d72ca"></div>
<div style="position:absolute;left:538px;top:753px;width:7px;height:2px;background:#0d72ca"></div>
<div style="position:absolute;left:538px;top:767px;width:2px;height:28px;background:#087dc3"></div>
<div style="position:absolute;left:538px;top:781px;width:7px;height:2px;background:#087dc3"></div>
<div style="position:absolute;left:538px;top:795px;width:2px;height:28px;background:#0588bc"></div>
<div style="position:absolute;left:538px;top:809px;width:7px;height:2px;background:#0588bc"></div>
<div style="position:absolute;left:538px;top:823px;width:2px;height:16px;background:#0292b4"></div>
<div style="position:absolute;left:538px;top:837px;width:7px;height:2px;background:#0292b4"></div>
<div style="position:absolute;left:538px;top:907px;width:2px;height:28px;background:#01af98"></div>
<div style="position:absolute;left:538px;top:921px;width:7px;height:2px;background:#01af98"></div>
<div style="position:absolute;left:538px;top:935px;width:2px;height:28px;background:#03b88e"></div>
<div style="position:absolute;left:538px;top:949px;width:7px;height:2px;background:#03b88e"></div>
<div style="position:absolute;left:538px;top:963px;width:2px;height:16px;background:#06bf84"></div>
<div style="position:absolute;left:538px;top:977px;width:7px;height:2px;background:#06bf84"></div>
<div style="position:absolute;left:538px;top:1047px;width:2px;height:28px;background:#15d163"></div>
<div style="position:absolute;left:538px;top:1061px;width:7px;height:2px;background:#15d163"></div>
<div style="position:absolute;left:538px;top:1075px;width:2px;height:28px;background:#1cd558"></div>
<div style="position:absolute;left:538px;top:1089px;width:7px;height:2px;background:#1cd558"></div>
<div style="position:absolute;left:538px;top:1103px;width:2px;height:28px;background:#23d84e"></div>
<div style="position:absolute;left:538px;top:1117px;width:7px;height:2px;background:#23d84e"></div>
<div style="position:absolute;left:538px;top:1131px;width:2px;height:28px;background:#2bda43"></div>
<div style="position:absolute;left:538px;top:1145px;width:7px;height:2px;background:#2bda43"></div>
<div style="position:absolute;left:538px;top:1159px;width:2px;height:16px;background:#35db39"></div>
<div style="position:absolute;left:538px;top:1173px;width:7px;height:2px;background:#35db39"></div>
<div style="position:absolute;left:15px;top:1397px;width:13px;height:2px;background:#92c38b"></div>
<div style="position:absolute;left:21px;top:1397px;width:2px;height:14px;background:#92c38b"></div>
<div style="position:absolute;left:28px;top:1397px;width:12px;height:2px;background:#92c38b"></div>
<div style="position:absolute;left:355px;top:1397px;width:13px;height:2px;background:#92c38b"></div>
<svg style="position:absolute;left:15px;top:1411px" width="14" height="28"><path d="M7.0 0 V7.0 Q7.0 15.0 15.0 15.0 H13.6" fill="none" stroke="#92c38b" stroke-width="2"/></svg>
<div style="position:absolute;left:28px;top:1425px;width:12px;height:2px;background:#92c38b"></div>
<div style="position:absolute;left:519px;top:1215px;width:38px;height:28px;background:#454756"></div>
<div style="position:absolute;left:519px;top:1243px;width:38px;height:28px;background:#585a6b"></div>
<div style="position:absolute;left:557px;top:1215px;width:38px;height:28px;background:#d27d93"></div>
<div style="position:absolute;left:557px;top:1243px;width:38px;height:28px;background:#d27d93"></div>
<div style="position:absolute;left:595px;top:1215px;width:38px;height:28px;background:#92c38b"></div>
<div style="position:absolute;left:595px;top:1243px;width:38px;height:28px;background:#92c38b"></div>
<div style="position:absolute;left:633px;top:1215px;width:38px;height:28px;background:#d5c398"></div>
<div style="position:absolute;left:633px;top:1243px;width:38px;height:28px;background:#d5c398"></div>
<div style="position:absolute;left:671px;top:1215px;width:38px;height:28px;background:#7a9ed6"></div>
<div style="position:absolute;left:671px;top:1243px;width:38px;height:28px;background:#7a9ed6"></div>
<div style="position:absolute;left:709px;top:1215px;width:37px;height:28px;background:#d1a6c6"></div>
<div style="position:absolute;left:709px;top:1243px;width:37px;height:28px;background:#d1a6c6"></div>
<div style="position:absolute;left:746px;top:1215px;width:38px;height:28px;background:#84c4b6"></div>
<div style="position:absolute;left:746px;top:1243px;width:38px;height:28px;background:#84c4b6"></div>
<div style="position:absolute;left:784px;top:1215px;width:38px;height:28px;background:#a6abc5"></div>
<div style="position:absolute;left:784px;top:1243px;width:38px;height:28px;background:#9398ad"></div>
</div>
</body></html>
